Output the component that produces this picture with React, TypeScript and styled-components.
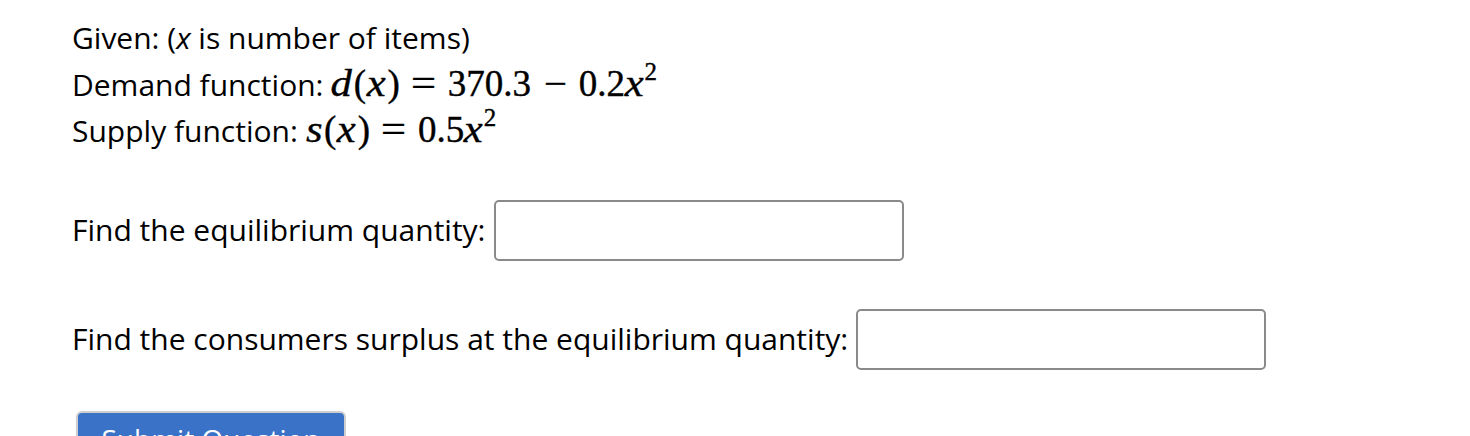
import React from 'react';
import styled, { createGlobalStyle } from 'styled-components';

const GlobalStyle = createGlobalStyle`
  html, body {
    margin: 0;
    padding: 0;
    background: #ffffff;
  }
  body {
    font-family: 'Open Sans', 'Liberation Sans', sans-serif;
    color: #000;
  }
`;

export default function App() {
  return (
    <>
      <GlobalStyle />
      <Page>
        <Line>
          Given: (<Em>x</Em> is number of items)
        </Line>
        <Line>
          Demand function:{' '}
          <MathExpr>
            <MathVar>d</MathVar>
            <Paren>(</Paren>
            <MathVar>x</MathVar>
            <Paren>)</Paren>
            <Rel>=</Rel>
            <MathNum>370.3</MathNum>
            <Bin>−</Bin>
            <MathNum>0.2</MathNum>
            <MathVar>x</MathVar>
            <Sup>2</Sup>
          </MathExpr>
        </Line>
        <Line>
          Supply function:{' '}
          <MathExpr>
            <MathVar>s</MathVar>
            <Paren>(</Paren>
            <MathVar>x</MathVar>
            <Paren>)</Paren>
            <Rel>=</Rel>
            <MathNum>0.5</MathNum>
            <MathVar>x</MathVar>
            <Sup>2</Sup>
          </MathExpr>
        </Line>

        <Question>
          <span>Find the equilibrium quantity:</span>
          <AnswerInput type="text" aria-label="equilibrium quantity" />
        </Question>

        <Question>
          <span>Find the consumers surplus at the equilibrium quantity:</span>
          <AnswerInput type="text" aria-label="consumers surplus" />
        </Question>

        <SubmitButton type="button">Submit Question</SubmitButton>
      </Page>
    </>
  );
}

const Page = styled.div`
  padding: 15px 0 0 72px;
  font-size: 30px;
  line-height: 46.5px;
`;

const Line = styled.div`
  white-space: nowrap;
`;

const Em = styled.em`
  font-style: italic;
`;

const MathExpr = styled.span`
  font-family: 'Liberation Serif', 'DejaVu Serif', serif;
  font-size: 37px;
  line-height: 0;
  white-space: nowrap;
  -webkit-text-stroke: 0.4px #000;
`;

const MathVar = styled.span`
  display: inline-block;
  font-style: italic;
  transform: scaleX(1.15);
  margin: 0 2px 0 1px;
`;

const Paren = styled.span`
  margin: 0 1px;
`;

const MathNum = styled.span``;

const Rel = styled.span`
  display: inline-block;
  margin: 0 14px 0 12px;
  transform: scaleX(1.2);
`;

const Bin = styled.span`
  display: inline-block;
  margin: 0 13px 0 14px;
  transform: scaleX(1.1);
`;

const Sup = styled.sup`
  font-size: 25px;
  vertical-align: 16px;
  line-height: 0;
`;

const Question = styled.div`
  display: flex;
  align-items: center;
  gap: 8px;
  margin-top: 45px;
  white-space: nowrap;

  & + & {
    margin-top: 48px;
  }
`;

const AnswerInput = styled.input`
  width: 410px;
  height: 61px;
  box-sizing: border-box;
  border: 2px solid #8a8a8a;
  border-radius: 5px;
  background: #fff;
  outline: none;
  font-size: 24px;
  padding: 0 10px;
`;

const SubmitButton = styled.button`
  display: block;
  margin-top: 41px;
  margin-left: 4px;
  width: 270px;
  height: 56px;
  box-sizing: border-box;
  background: #3a72c8;
  border: 2px solid #cfcfcf;
  border-radius: 6px;
  color: #fff;
  font-family: 'Open Sans', 'Liberation Sans', sans-serif;
  font-size: 28px;
  padding: 0;
  line-height: 50px;
`;
